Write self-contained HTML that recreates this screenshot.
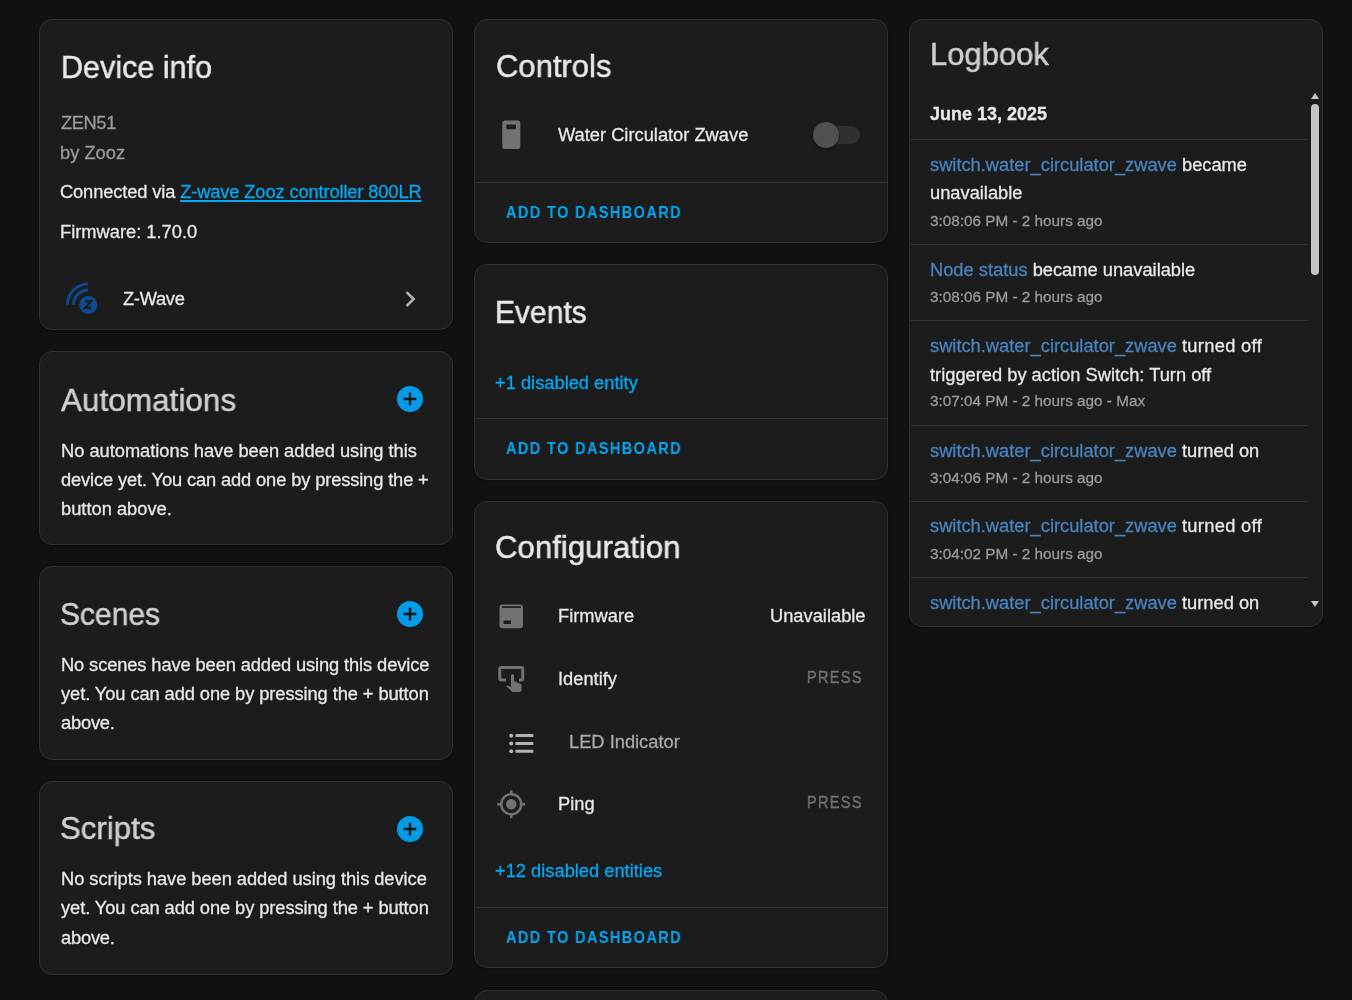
<!DOCTYPE html>
<html><head><meta charset="utf-8"><style>
html,body{margin:0;padding:0;width:1352px;height:1000px;overflow:hidden;background:#111111;font-family:"Liberation Sans",sans-serif;}
.card{position:absolute;box-sizing:border-box;background:#1c1c1c;border:1px solid #303030;border-radius:13px;box-shadow:0 1px 2px rgba(0,0,0,.35)}
.t{position:absolute;line-height:0;white-space:nowrap;will-change:transform;-webkit-text-stroke:0.28px currentColor}
svg{overflow:visible}
</style></head><body>
<div class="card" style="left:39px;top:19px;width:414px;height:311px"></div>
<div class="t" style="left:60.69px;top:66.50px;font-size:32px;color:#e9e9e9;transform:scaleX(0.9542);transform-origin:0 0;-webkit-text-stroke:0.5px #e9e9e9">Device info</div>
<div class="t" style="left:61px;top:123.09px;font-size:18.3px;color:#9b9b9b;letter-spacing:-0.4px">ZEN51</div>
<div class="t" style="left:60px;top:152.79px;font-size:18.3px;color:#9b9b9b">by Zooz</div>
<div class="t" style="left:60px;top:192.29px;font-size:18.3px;color:#e9e9e9;letter-spacing:-0.127px">Connected via <span style="color:#03a9f4;text-decoration:underline;text-underline-offset:2.2px;text-decoration-thickness:1.5px">Z-wave Zooz controller 800LR</span></div>
<div class="t" style="left:60px;top:231.59px;font-size:18.3px;color:#e9e9e9">Firmware: 1.70.0</div>
<svg style="position:absolute;left:62px;top:279px" width="40" height="38" viewBox="0 0 40 38">
<path d="M5.35 25.8 A20.85 20.85 0 0 1 26.2 4.95" stroke="#0c4a92" stroke-width="2.8" fill="none"/>
<path d="M11.4 25.8 A14.8 14.8 0 0 1 26.2 11" stroke="#0c4a92" stroke-width="2.8" fill="none"/>
<circle cx="26.3" cy="25.9" r="9.1" fill="#0c4a92"/>
<path d="M23.3 22.3 H29.2 L23 29 H29" stroke="#1c1c1c" stroke-width="2.4" fill="none" stroke-linejoin="miter"/>
</svg>
<div class="t" style="left:123px;top:298.60px;font-size:18.3px;color:#e9e9e9;letter-spacing:-0.3px">Z-Wave</div>
<svg style="position:absolute;left:400px;top:286px" width="24" height="26" viewBox="0 0 24 26"><path d="M6.6 6.2 L13.6 13.1 L6.6 20" stroke="#b3b3b3" stroke-width="2.5" fill="none"/></svg>
<div class="card" style="left:39px;top:351px;width:414px;height:194px"></div>
<div class="t" style="left:61.2px;top:399.60px;font-size:32px;color:#d0d0d0;transform:scaleX(0.9847);transform-origin:0 0;-webkit-text-stroke:0.5px #d0d0d0">Automations</div>
<svg style="position:absolute;left:396.1px;top:385.1px" width="28" height="28" viewBox="0 0 28 28"><circle cx="14" cy="14" r="13" fill="#039be5"/><path d="M14 7.7 V20.3 M7.7 14 H20.3" stroke="#141414" stroke-width="2.4"/></svg>
<div class="t" style="left:60.5px;top:450.50px;font-size:18.3px;color:#e9e9e9;letter-spacing:-0.02px">No automations have been added using this</div>
<div class="t" style="left:60.5px;top:479.80px;font-size:18.3px;color:#e9e9e9;letter-spacing:-0.13px">device yet. You can add one by pressing the +</div>
<div class="t" style="left:60.5px;top:509.10px;font-size:18.3px;color:#e9e9e9">button above.</div>
<div class="card" style="left:39px;top:566px;width:414px;height:194px"></div>
<div class="t" style="left:60.26px;top:613.80px;font-size:32px;color:#d0d0d0;transform:scaleX(0.9371);transform-origin:0 0;-webkit-text-stroke:0.5px #d0d0d0">Scenes</div>
<svg style="position:absolute;left:396.1px;top:600.1px" width="28" height="28" viewBox="0 0 28 28"><circle cx="14" cy="14" r="13" fill="#039be5"/><path d="M14 7.7 V20.3 M7.7 14 H20.3" stroke="#141414" stroke-width="2.4"/></svg>
<div class="t" style="left:60.5px;top:664.69px;font-size:18.3px;color:#e9e9e9;letter-spacing:-0.11px">No scenes have been added using this device</div>
<div class="t" style="left:60.5px;top:693.99px;font-size:18.3px;color:#e9e9e9;letter-spacing:-0.084px">yet. You can add one by pressing the + button</div>
<div class="t" style="left:60.5px;top:723.29px;font-size:18.3px;color:#e9e9e9;letter-spacing:-0.2px">above.</div>
<div class="card" style="left:39px;top:781px;width:414px;height:194px"></div>
<div class="t" style="left:60.22px;top:828.10px;font-size:32px;color:#d0d0d0;transform:scaleX(0.975);transform-origin:0 0;-webkit-text-stroke:0.5px #d0d0d0">Scripts</div>
<svg style="position:absolute;left:396.1px;top:815.1px" width="28" height="28" viewBox="0 0 28 28"><circle cx="14" cy="14" r="13" fill="#039be5"/><path d="M14 7.7 V20.3 M7.7 14 H20.3" stroke="#141414" stroke-width="2.4"/></svg>
<div class="t" style="left:60.5px;top:879.00px;font-size:18.3px;color:#e9e9e9;letter-spacing:-0.047px">No scripts have been added using this device</div>
<div class="t" style="left:60.5px;top:908.29px;font-size:18.3px;color:#e9e9e9;letter-spacing:-0.084px">yet. You can add one by pressing the + button</div>
<div class="t" style="left:60.5px;top:937.60px;font-size:18.3px;color:#e9e9e9;letter-spacing:-0.2px">above.</div>
<div class="card" style="left:474px;top:19px;width:414px;height:224px"></div>
<div class="t" style="left:496.03px;top:66.40px;font-size:32px;color:#e9e9e9;transform:scaleX(0.9684);transform-origin:0 0;-webkit-text-stroke:0.5px #e9e9e9">Controls</div>
<svg style="position:absolute;left:500px;top:118px" width="24" height="34" viewBox="0 0 24 34"><rect x="2.3" y="2.5" width="18" height="28.5" rx="2.8" fill="#727272"/><rect x="6.3" y="6.5" width="9.7" height="4.8" rx="1.2" fill="#1c1c1c"/></svg>
<div class="t" style="left:558px;top:134.59px;font-size:18.3px;color:#e9e9e9">Water Circulator Zwave</div>
<div style="position:absolute;left:815px;top:125.5px;width:45px;height:18.5px;border-radius:9.25px;background:#303030"></div>
<div style="position:absolute;left:813px;top:122px;width:26px;height:26px;border-radius:50%;background:#505050;box-shadow:0 1px 3px rgba(0,0,0,.5)"></div>
<div style="position:absolute;left:475px;top:182px;width:412px;height:1px;background:#303030"></div>
<div class="t" style="left:506px;top:211.82px;font-size:16.5px;color:#03a9f4;transform:scaleX(0.88);transform-origin:0 0;font-weight:700;letter-spacing:1.57px;-webkit-text-stroke:0">ADD TO DASHBOARD</div>
<div class="card" style="left:474px;top:264px;width:414px;height:216px"></div>
<div class="t" style="left:494.62px;top:311.50px;font-size:32px;color:#e9e9e9;transform:scaleX(0.9379);transform-origin:0 0;-webkit-text-stroke:0.5px #e9e9e9">Events</div>
<div class="t" style="left:495px;top:383.00px;font-size:18.3px;color:#03a9f4">+1 disabled entity</div>
<div style="position:absolute;left:475px;top:418px;width:412px;height:1px;background:#303030"></div>
<div class="t" style="left:506px;top:447.83px;font-size:16.5px;color:#03a9f4;transform:scaleX(0.88);transform-origin:0 0;font-weight:700;letter-spacing:1.57px;-webkit-text-stroke:0">ADD TO DASHBOARD</div>
<div class="card" style="left:474px;top:501px;width:414px;height:467px"></div>
<div class="t" style="left:494.83px;top:547.40px;font-size:32px;color:#e9e9e9;transform:scaleX(0.9745);transform-origin:0 0;-webkit-text-stroke:0.5px #e9e9e9">Configuration</div>
<svg style="position:absolute;left:497px;top:602px" width="30" height="30" viewBox="0 0 30 30"><path d="M5.5 2.5 H23 A3 3 0 0 1 26 5.5 V23.3 A3 3 0 0 1 23 26.3 H5.5 A3 3 0 0 1 2.5 23.3 V5.5 A3 3 0 0 1 5.5 2.5 Z" fill="#727272"/><rect x="5" y="4.3" width="19" height="1.6" fill="#1c1c1c"/><rect x="6.5" y="18.5" width="7.5" height="3.5" fill="#1c1c1c"/></svg>
<div class="t" style="left:558px;top:616.30px;font-size:18.3px;color:#e9e9e9">Firmware</div>
<div class="t" style="right:486px;top:616.00px;font-size:18.3px;color:#e9e9e9">Unavailable</div>
<svg style="position:absolute;left:496px;top:664px" width="32" height="32" viewBox="0 0 32 32"><path d="M10 16 H5.25 A1.5 1.5 0 0 1 3.75 14.5 V5 A1.5 1.5 0 0 1 5.25 3.5 H25.25 A1.5 1.5 0 0 1 26.75 5 V14.5 A1.5 1.5 0 0 1 25.25 16 H23" stroke="#727272" stroke-width="3" fill="none"/><path d="M15 11.5 A1.5 1.5 0 0 1 18 11.5 V17 L25.5 20.5 V26.3 A1.7 1.7 0 0 1 23.8 28 H16.5 L10.3 22.2 L11.2 21.3 L15 23 Z" fill="#727272"/></svg>
<div class="t" style="left:558px;top:678.80px;font-size:18.3px;color:#e9e9e9">Identify</div>
<div class="t" style="right:489.5px;top:678.00px;font-size:16px;color:#737373;transform:scaleX(0.92);transform-origin:100% 0;letter-spacing:1.3px;-webkit-text-stroke:0.4px #737373">PRESS</div>
<svg style="position:absolute;left:505px;top:730px" width="32" height="26" viewBox="0 0 32 26"><g fill="#b3b3b3"><circle cx="6.2" cy="5.7" r="2"/><circle cx="6.2" cy="13.5" r="2"/><circle cx="6.2" cy="21.3" r="2"/><rect x="10.5" y="4.1" width="17.8" height="3" rx="0.5"/><rect x="10.5" y="12" width="17.8" height="3" rx="0.5"/><rect x="10.5" y="19.8" width="17.8" height="3" rx="0.5"/></g></svg>
<div class="t" style="left:568.5px;top:742.00px;font-size:18.3px;color:#a9a9a9">LED Indicator</div>
<svg style="position:absolute;left:495px;top:788px" width="33" height="33" viewBox="0 0 33 33"><g fill="none" stroke="#727272" stroke-width="2.5"><circle cx="16.25" cy="16.25" r="10"/></g><circle cx="16.25" cy="16.25" r="5.2" fill="#727272"/><g stroke="#727272" stroke-width="2.5"><path d="M16.25 2.2 V6 M16.25 26.5 V30.3 M2.2 16.25 H6 M26.5 16.25 H30.3"/></g></svg>
<div class="t" style="left:558px;top:803.89px;font-size:18.3px;color:#e9e9e9">Ping</div>
<div class="t" style="right:489.5px;top:803.30px;font-size:16px;color:#737373;transform:scaleX(0.92);transform-origin:100% 0;letter-spacing:1.3px;-webkit-text-stroke:0.4px #737373">PRESS</div>
<div class="t" style="left:495px;top:870.80px;font-size:18.3px;color:#03a9f4">+12 disabled entities</div>
<div style="position:absolute;left:475px;top:907px;width:412px;height:1px;background:#303030"></div>
<div class="t" style="left:506px;top:936.62px;font-size:16.5px;color:#03a9f4;transform:scaleX(0.88);transform-origin:0 0;font-weight:700;letter-spacing:1.57px;-webkit-text-stroke:0">ADD TO DASHBOARD</div>
<div class="card" style="left:474px;top:990px;width:414px;height:60px"></div>
<div class="card" style="left:909px;top:19px;width:414px;height:608px"></div>
<div class="t" style="left:929.96px;top:53.60px;font-size:32px;color:#d0d0d0;transform:scaleX(0.9678);transform-origin:0 0;-webkit-text-stroke:0.5px #d0d0d0">Logbook</div>
<div class="t" style="left:930px;top:113.60px;font-size:18px;color:#e9e9e9;font-weight:700">June 13, 2025</div>
<div style="position:absolute;left:910px;top:139px;width:398px;height:1px;background:#303030"></div>
<div class="t" style="left:930px;top:164.59px;font-size:18.3px;color:#e9e9e9"><span style="color:#4784bf">switch.water_circulator_zwave</span> became</div>
<div class="t" style="left:930px;top:193.00px;font-size:18.3px;color:#e9e9e9">unavailable</div>
<div class="t" style="left:930px;top:220.65px;font-size:15.3px;color:#9b9b9b">3:08:06 PM - 2 hours ago</div>
<div style="position:absolute;left:910px;top:244px;width:398px;height:1px;background:#303030"></div>
<div class="t" style="left:930px;top:270.20px;font-size:18.3px;color:#e9e9e9"><span style="color:#4784bf">Node status</span> became unavailable</div>
<div class="t" style="left:930px;top:297.04px;font-size:15.3px;color:#9b9b9b">3:08:06 PM - 2 hours ago</div>
<div style="position:absolute;left:910px;top:320px;width:398px;height:1px;background:#303030"></div>
<div class="t" style="left:930px;top:345.60px;font-size:18.3px;color:#e9e9e9"><span style="color:#4784bf">switch.water_circulator_zwave</span> <span style="letter-spacing:0.3px">turned of</span>f</div>
<div class="t" style="left:930px;top:374.60px;font-size:18.3px;color:#e9e9e9">triggered by action Switch: Turn off</div>
<div class="t" style="left:930px;top:401.04px;font-size:15.3px;color:#9b9b9b">3:07:04 PM - 2 hours ago - Max</div>
<div style="position:absolute;left:910px;top:425px;width:398px;height:1px;background:#303030"></div>
<div class="t" style="left:930px;top:451.20px;font-size:18.3px;color:#e9e9e9"><span style="color:#4784bf">switch.water_circulator_zwave</span> turned on</div>
<div class="t" style="left:930px;top:477.64px;font-size:15.3px;color:#9b9b9b">3:04:06 PM - 2 hours ago</div>
<div style="position:absolute;left:910px;top:501px;width:398px;height:1px;background:#303030"></div>
<div class="t" style="left:930px;top:526.30px;font-size:18.3px;color:#e9e9e9"><span style="color:#4784bf">switch.water_circulator_zwave</span> <span style="letter-spacing:0.3px">turned of</span>f</div>
<div class="t" style="left:930px;top:553.54px;font-size:15.3px;color:#9b9b9b">3:04:02 PM - 2 hours ago</div>
<div style="position:absolute;left:910px;top:577px;width:398px;height:1px;background:#303030"></div>
<div class="t" style="left:930px;top:602.50px;font-size:18.3px;color:#e9e9e9"><span style="color:#4784bf">switch.water_circulator_zwave</span> turned on</div>
<svg style="position:absolute;left:1309px;top:91px" width="12" height="10" viewBox="0 0 12 10"><path d="M2 8 L6 2 L10 8 Z" fill="#c6c6c6"/></svg>
<div style="position:absolute;left:1311px;top:104px;width:8px;height:171px;border-radius:4px;background:#c4c4c4"></div>
<svg style="position:absolute;left:1309px;top:599px" width="12" height="10" viewBox="0 0 12 10"><path d="M2 2 L10 2 L6 8 Z" fill="#c6c6c6"/></svg>
</body></html>
